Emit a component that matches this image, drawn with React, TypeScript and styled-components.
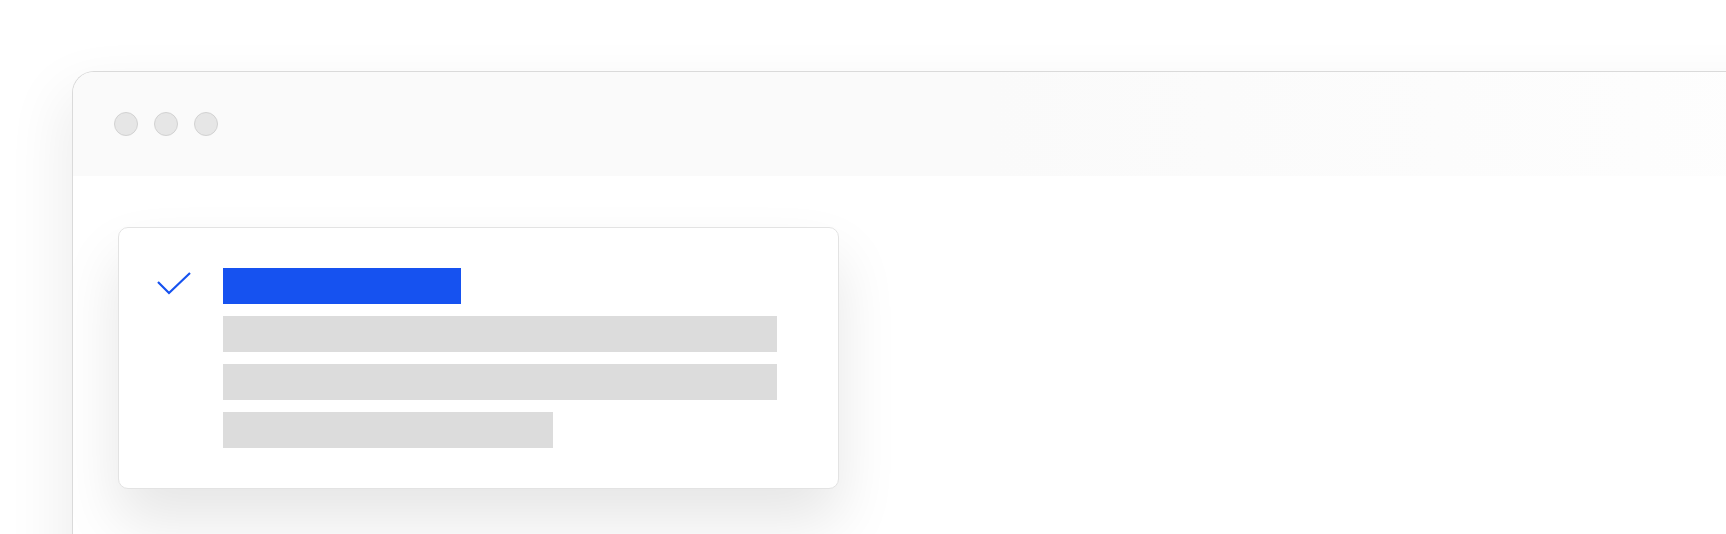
import React from "react";
import styled, { createGlobalStyle } from "styled-components";

const GlobalStyle = createGlobalStyle`
  html, body {
    margin: 0;
    padding: 0;
    background: #fff;
    overflow: hidden;
    font-family: "Inter", "Liberation Sans", sans-serif;
  }
`;

const Page = styled.div`
  height: 534px;
  padding: 71px 0 0 72px;
  box-sizing: border-box;
  overflow: hidden;
`;

const BrowserWindow = styled.div`
  width: 1760px;
  height: 600px;
  border: 1px solid #dadada;
  border-right: none;
  border-radius: 22px 0 0 0;
  background: #fff;
  box-shadow: -10px 20px 60px rgba(0, 0, 0, 0.07);
  overflow: hidden;
  box-sizing: border-box;
`;

const TitleBar = styled.div`
  height: 104px;
  display: flex;
  align-items: center;
  gap: 16px;
  padding-left: 41px;
  background: linear-gradient(
    to right,
    #fafafa 0%,
    #fafafa 52%,
    #fcfcfc 78%,
    #fefefe 100%
  );
`;

const Dot = styled.span`
  width: 24px;
  height: 24px;
  border-radius: 50%;
  background: #e6e6e6;
  border: 1px solid #d2d2d2;
  box-sizing: border-box;
`;

const Content = styled.div`
  padding: 51px 0 0 45px;
`;

const Card = styled.div`
  width: 721px;
  height: 262px;
  box-sizing: border-box;
  border: 1px solid #e3e3e3;
  border-radius: 10px;
  background: #fff;
  box-shadow: 0 32px 60px rgba(0, 0, 0, 0.1);
  display: flex;
  gap: 32px;
  padding: 40px 0 0 38px;
`;

const CheckIcon = styled.svg`
  width: 34px;
  height: 26px;
  flex-shrink: 0;
  margin-top: 4px;
`;

const Lines = styled.div`
  display: flex;
  flex-direction: column;
  gap: 12px;
`;

const Bar = styled.div<{ $width: number; $accent?: boolean }>`
  width: ${(p) => p.$width}px;
  height: 36px;
  background: ${(p) => (p.$accent ? "#1652f0" : "#dcdcdc")};
`;

const App = () => {
  return (
    <Page>
      <GlobalStyle />
      <BrowserWindow>
        <TitleBar>
          <Dot />
          <Dot />
          <Dot />
        </TitleBar>
        <Content>
          <Card>
            <CheckIcon viewBox="0 0 34 26" fill="none">
              <polyline
                points="1,10 12,21 33,1"
                stroke="#1652f0"
                strokeWidth="2.2"
              />
            </CheckIcon>
            <Lines>
              <Bar $width={238} $accent />
              <Bar $width={554} />
              <Bar $width={554} />
              <Bar $width={330} />
            </Lines>
          </Card>
        </Content>
      </BrowserWindow>
    </Page>
  );
};

export default App;
